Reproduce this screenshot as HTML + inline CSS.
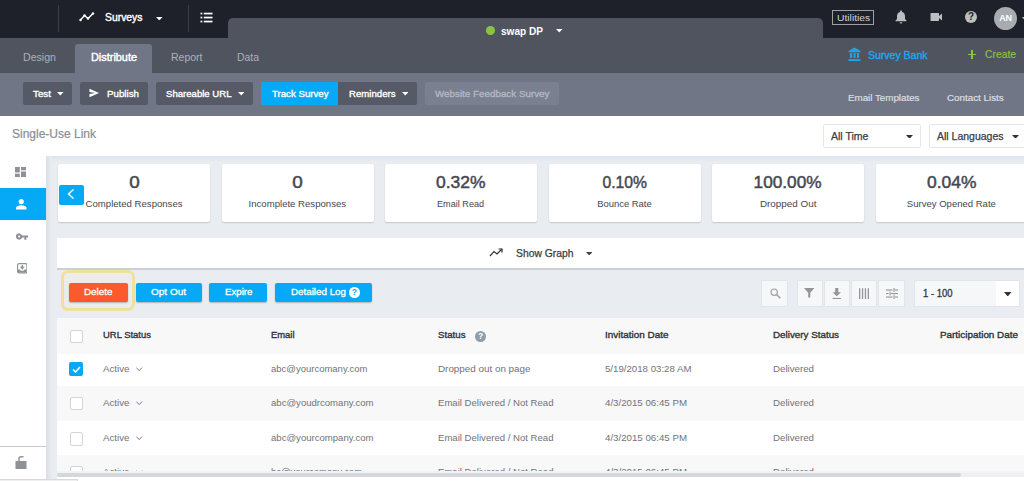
<!DOCTYPE html>
<html><head>
<meta charset="utf-8">
<style>
*{box-sizing:border-box;margin:0;padding:0}
html,body{width:1024px;height:481px;overflow:hidden;background:#fff;font-family:"Liberation Sans",sans-serif;}
body{position:relative;}
.abs{position:absolute;}
.t{position:absolute;white-space:nowrap;line-height:1;}
.s{display:inline-block;white-space:nowrap;}
#topbar{left:0;top:0;width:1024px;height:38px;background:#1f212a;}
#tabs{left:0;top:38px;width:1024px;height:35px;background:#50545e;}
#nametab{left:228px;top:17.500px;width:595px;height:25px;background:#50545e;border-radius:5px 5px 0 0;}
#toolbar{left:0;top:73px;width:1024px;height:43.300px;background:#717687;}
.vdiv{width:1px;background:#3a3d47;top:5px;height:27px;}
.btn{position:absolute;top:82px;height:22.5px;background:#565a66;border-radius:2px;}
.caret{position:absolute;width:0;height:0;border-left:3px solid transparent;border-right:3px solid transparent;border-top:3.5px solid #fff;}
#content{left:46px;top:156px;width:978px;height:325px;background:#e9edf1;}
.card{position:absolute;top:164px;width:152px;height:58px;background:#fff;border-radius:2px;box-shadow:0 1px 1.5px rgba(0,0,0,.16);}
.bbtn{position:absolute;top:283px;height:19px;background:#05a9f5;border-radius:2px;box-shadow:0 1px 1.5px rgba(0,0,0,.25);}
.ib{position:absolute;top:279.5px;height:27px;background:#f6f7f8;border:1px solid #e1e4e8;border-radius:1px;}
.row{position:absolute;left:0;width:967px;}
.cb{position:absolute;left:12.5px;width:13px;height:13.5px;border:1px solid #d2d5d9;border-radius:2px;background:#fff;}
</style>
</head>
<body>
<div class="abs" id="topbar"></div>
<div class="abs" id="tabs"></div>
<div class="abs" id="nametab"></div>
<div class="abs" id="toolbar"></div>
<div class="abs vdiv" style="left:58px"></div>
<div class="abs vdiv" style="left:188px"></div>

<svg class="abs" style="left:79px;top:12px" width="16" height="10" viewBox="0 0 16 10"><polyline points="1.5,8 5.5,3.5 9,6.5 14,1.5" fill="none" stroke="#fff" stroke-width="1.4"></polyline><circle cx="1.5" cy="8" r="1.2" fill="#fff"></circle><circle cx="5.5" cy="3.5" r="1.2" fill="#fff"></circle><circle cx="9" cy="6.5" r="1.2" fill="#fff"></circle><circle cx="14" cy="1.5" r="1.2" fill="#fff"></circle></svg>
<div class="t" style="top: 12px; font-size: 10.5px; color: rgb(255, 255, 255); -webkit-text-stroke: 0.4px rgb(255, 255, 255); left: 104.5px; transform: scaleX(0.988); transform-origin: 0px 0px;">Surveys</div>
<svg class="abs" style="left:156px;top:16.5px" width="6.5" height="3.5" viewBox="0 0 6.5 3.5"><path d="M0 0h6.5l-3.25 3.5z" fill="#fff"></path></svg>
<svg class="abs" style="left:200px;top:12px" width="13" height="11" viewBox="0 0 13 11"><g fill="#fff"><rect x="0.500" y="0.700" width="1.800" height="1.700"></rect><rect x="3.800" y="0.700" width="8.700" height="1.700"></rect><rect x="0.500" y="4.700" width="1.800" height="1.700"></rect><rect x="3.800" y="4.700" width="8.700" height="1.700"></rect><rect x="0.500" y="8.700" width="1.800" height="1.700"></rect><rect x="3.800" y="8.700" width="8.700" height="1.700"></rect></g></svg>
<div class="abs" style="left:486px;top:26.25px;width:9px;height:9px;border-radius:50%;background:#8bc53f"></div>
<div class="t" style="top: 26px; font-size: 10.5px; color: rgb(255, 255, 255); font-weight: bold; left: 501px; transform: scaleX(0.96); transform-origin: 0px 0px;">swap DP</div>
<svg class="abs" style="left:556px;top:29px" width="6.5" height="3.5" viewBox="0 0 6.5 3.5"><path d="M0 0h6.5l-3.25 3.5z" fill="#fff"></path></svg>
<div class="abs" style="left:832px;top:10px;width:42px;height:15px;border:1px solid #9fa0a5;"></div>
<div class="t" style="top: 14px; font-size: 9.2px; color: rgb(207, 208, 211); left: 836.75px; transform: scaleX(1.123); transform-origin: 0px 0px;">Utilities</div>
<svg class="abs" style="left:895px;top:10px" width="12" height="14" viewBox="0 0 12 14"><path d="M6 0.500c.7 0 1 .5 1 1v.4c2 .5 3 2.100 3 4.100v3l1.500 1.500v.8h-11v-.8l1.500-1.500v-3c0-2 1-3.600 3-4.100v-.4c0-.5.300-1 1-1zM4.800 12.200h2.400c0 .7-.5 1.300-1.200 1.300s-1.200-.6-1.200-1.300z" fill="#bdbec2"></path></svg>
<svg class="abs" style="left:930px;top:12px" width="13" height="10" viewBox="0 0 13 10"><path d="M1 1h7.500c.3 0 .5.200.5.500v2.500l3-2.500v7l-3-2.500v2.500c0 .3-.2.500-.5.500h-7.500c-.3 0-.5-.2-.5-.5v-7c0-.3.200-.5.500-.5z" fill="#bdbec2"></path></svg>
<div class="abs" style="left:965px;top:11px;width:12px;height:12px;border-radius:50%;background:#bdbec2;color:#1f212a;font-size:10px;font-weight:bold;text-align:center;line-height:12px">?</div>
<div class="abs" style="left:994px;top:7px;width:23px;height:23px;border-radius:50%;background:#a9abb0;color:#fff;font-size:9px;font-weight:bold;text-align:center;line-height:23px;letter-spacing:-0.3px">AN</div>
<svg class="abs" style="left:1021.5px;top:16.5px" width="6.5" height="3.5" viewBox="0 0 6.5 3.5"><path d="M0 0h6.5l-3.25 3.5z" fill="#ccc"></path></svg>
<div class="abs" style="left:75px;top:44px;width:77px;height:29px;background:#717687;border-radius:3px 3px 0 0"></div>
<div class="t" style="top: 53px; font-size: 10px; color: rgb(173, 177, 187); left: 23px; transform: scaleX(1.06); transform-origin: 0px 0px;">Design</div>
<div class="t" style="top: 53px; font-size: 10px; color: rgb(255, 255, 255); -webkit-text-stroke: 0.4px rgb(255, 255, 255); left: 90.5px; transform: scaleX(1.089); transform-origin: 0px 0px;">Distribute</div>
<div class="t" style="top: 53px; font-size: 10px; color: rgb(173, 177, 187); left: 171px; transform: scaleX(1.049); transform-origin: 0px 0px;">Report</div>
<div class="t" style="top: 53px; font-size: 10px; color: rgb(173, 177, 187); left: 237px; transform: scaleX(1.041); transform-origin: 0px 0px;">Data</div>
<svg class="abs" style="left:848px;top:47px" width="13" height="15" viewBox="0 0 13 15"><g fill="#1ba7ee"><path d="M6.500 0.500l6 3.500v1.200h-12v-1.200z"></path><rect x="2" y="6" width="2" height="5"></rect><rect x="5.500" y="6" width="2" height="5"></rect><rect x="9" y="6" width="2" height="5"></rect><rect x="0.500" y="12.200" width="12" height="1.800"></rect></g></svg>
<div class="t" style="top: 51px; font-size: 10px; color: rgb(27, 167, 238); -webkit-text-stroke: 0.35px rgb(27, 167, 238); left: 867.5px; transform: scaleX(1.049); transform-origin: 0px 0px;">Survey Bank</div>
<div class="abs" style="left:967.5px;top:53.5px;width:8.5px;height:1.6px;background:#8bc53f"></div>
<div class="abs" style="left:971px;top:50px;width:1.6px;height:8.5px;background:#8bc53f"></div>
<div class="t" style="top: 50px; font-size: 10px; color: rgb(139, 197, 63); -webkit-text-stroke: 0.15px rgb(139, 197, 63); left: 985px; transform: scaleX(1.033); transform-origin: 0px 0px;">Create</div>
<div class="btn" style="left:23px;width:49px;"></div>
<div class="t" style="top: 89px; font-size: 9.5px; color: rgb(255, 255, 255); -webkit-text-stroke: 0.35px rgb(255, 255, 255); left: 33px; transform: scaleX(1.032); transform-origin: 0px 0px;">Test</div>
<svg class="abs" style="left:57px;top:92px" width="6.5" height="3.5" viewBox="0 0 6.5 3.5"><path d="M0 0h6.5l-3.25 3.5z" fill="#fff"></path></svg>
<div class="btn" style="left:80px;width:68px;"></div>
<svg class="abs" style="left:89px;top:88px" width="10.5" height="10" viewBox="0 0 11 10"><path d="M0.500 0.500l10 4.500l-10 4.500v-3.500l6-1l-6-1z" fill="#fff"></path></svg>
<div class="t" style="top: 89px; font-size: 9.5px; color: rgb(255, 255, 255); -webkit-text-stroke: 0.35px rgb(255, 255, 255); left: 106.5px; transform: scaleX(1.027); transform-origin: 0px 0px;">Publish</div>
<div class="btn" style="left:156px;width:97px;"></div>
<div class="t" style="top: 89px; font-size: 9.5px; color: rgb(255, 255, 255); -webkit-text-stroke: 0.35px rgb(255, 255, 255); left: 166px; transform: scaleX(1.008); transform-origin: 0px 0px;">Shareable URL</div>
<svg class="abs" style="left:237.5px;top:92px" width="6.5" height="3.5" viewBox="0 0 6.5 3.5"><path d="M0 0h6.5l-3.25 3.5z" fill="#fff"></path></svg>
<div class="btn" style="left:261px;width:77px;background:#05a9f5;border-radius:2px 0 0 2px"></div>
<div class="t" style="top: 89px; font-size: 9.5px; color: rgb(255, 255, 255); -webkit-text-stroke: 0.35px rgb(255, 255, 255); left: 271.5px; transform: scaleX(1.016); transform-origin: 0px 0px;">Track Survey</div>
<div class="btn" style="left:338px;width:78.5px;border-radius:0 2px 2px 0"></div>
<div class="t" style="top: 89px; font-size: 9.5px; color: rgb(255, 255, 255); -webkit-text-stroke: 0.35px rgb(255, 255, 255); left: 348.5px; transform: scaleX(1.012); transform-origin: 0px 0px;">Reminders</div>
<svg class="abs" style="left:401.5px;top:92px" width="6.5" height="3.5" viewBox="0 0 6.5 3.5"><path d="M0 0h6.5l-3.25 3.5z" fill="#fff"></path></svg>
<div class="btn" style="left:425px;width:134px;background:#7b8090"></div>
<div class="t" style="top: 89px; font-size: 9.5px; color: rgb(179, 183, 194); -webkit-text-stroke: 0.35px rgb(179, 183, 194); left: 434.5px; transform: scaleX(1.034); transform-origin: 0px 0px;">Website Feedback Survey</div>
<div class="t" style="top: 93px; font-size: 9.5px; color: rgb(223, 224, 229); -webkit-text-stroke: 0.15px rgb(223, 224, 229); left: 847.5px; transform: scaleX(1.028); transform-origin: 0px 0px;">Email Templates</div>
<div class="t" style="top: 93px; font-size: 9.5px; color: rgb(223, 224, 229); -webkit-text-stroke: 0.15px rgb(223, 224, 229); left: 946.75px; transform: scaleX(1.033); transform-origin: 0px 0px;">Contact Lists</div>
<div class="t" style="top: 128px; font-size: 12px; color: rgb(138, 141, 148); -webkit-text-stroke: 0.2px rgb(138, 141, 148); left: 11.5px; transform: scaleX(0.999); transform-origin: 0px 0px;">Single-Use Link</div>
<div class="abs" style="left:822.5px;top:124px;width:98px;height:24px;border:1px solid #e3e6ea;border-radius:2px;background:#fff"></div>
<div class="t" style="top: 132px; font-size: 10px; color: rgb(58, 61, 68); -webkit-text-stroke: 0.25px rgb(58, 61, 68); left: 830.5px; transform: scaleX(1.054); transform-origin: 0px 0px;">All Time</div>
<svg class="abs" style="left:905.7px;top:134.5px" width="7" height="3.8" viewBox="0 0 7 3.8"><path d="M0 0h7l-3.5 3.8z" fill="#333"></path></svg>
<div class="abs" style="left:929px;top:124px;width:100px;height:24px;border:1px solid #e3e6ea;border-radius:2px;background:#fff"></div>
<div class="t" style="top: 132px; font-size: 10px; color: rgb(58, 61, 68); -webkit-text-stroke: 0.25px rgb(58, 61, 68); left: 937px; transform: scaleX(1.049); transform-origin: 0px 0px;">All Languages</div>
<svg class="abs" style="left:1011.7px;top:134.5px" width="7" height="3.8" viewBox="0 0 7 3.8"><path d="M0 0h7l-3.5 3.8z" fill="#333"></path></svg>
<div class="abs" id="content"></div>
<div class="abs" style="left:46px;top:156px;width:978px;height:6px;background:linear-gradient(#dde3ec,#e9edf1)"></div>
<div class="abs" style="left:46px;top:156px;width:6px;height:325px;background:linear-gradient(90deg,#d9dfe8,#e9edf1)"></div>
<div class="abs" style="left:0;top:156px;width:46px;height:325px;background:#fff"></div>
<div class="abs" style="left:0;top:188px;width:46px;height:32px;background:#05a9f5"></div>
<svg class="abs" style="left:15px;top:167px" width="11" height="10" viewBox="0 0 11 10"><g fill="#8e9196"><rect x="0" y="0" width="4.800" height="5.500"></rect><rect x="6" y="0" width="5" height="3.300"></rect><rect x="0" y="6.700" width="4.800" height="3.300"></rect><rect x="6" y="4.500" width="5" height="5.500"></rect></g></svg>
<svg class="abs" style="left:16px;top:199px" width="10.5" height="10.500" viewBox="0 0 10 10"><circle cx="5" cy="2.500" r="2.400" fill="#fff"></circle><path d="M0 10v-1.500c0-1.800 3.300-2.600 5-2.600s5 .8 5 2.600v1.500z" fill="#fff"></path></svg>
<svg class="abs" style="left:15.5px;top:232.500px" width="12.500" height="7" viewBox="0 0 12 6"><path d="M3 0a3 3 0 1 0 2.800 4h2.200v2h2v-2h2v-2h-6.200a3 3 0 0 0-2.800-2zM3 2a1 1 0 1 1 0 2a1 1 0 0 1 0-2z" fill="#8e9196" fill-rule="evenodd"></path></svg>
<svg class="abs" style="left:16.5px;top:263px" width="10.500" height="10.500" viewBox="0 0 11 11"><rect x="0.600" y="0.600" width="9.800" height="9.800" rx="1.500" fill="none" stroke="#8e9196" stroke-width="1.200"></rect><path d="M3 4h5l-2.500 3z" fill="#8e9196"></path><rect x="4.700" y="2.200" width="1.600" height="2.500" fill="#8e9196"></rect><path d="M1 6.800h2.200l.8 1.400h3l.8-1.400h2.200v3.200h-9z" fill="#8e9196"></path></svg>
<div class="abs" style="left:0;top:446px;width:46px;height:1px;background:#c9c9c9"></div>
<svg class="abs" style="left:15px;top:456px" width="12" height="13" viewBox="0 0 12 13"><path d="M0.500 5h11v8h-11z" fill="#8e9196"></path><path d="M4 5v-2.500c0-1 .8-1.700 2-1.700h2.500" fill="none" stroke="#8e9196" stroke-width="1.500"></path></svg>
<div class="card" style="left:58px"></div>
<div class="t" style="top:175px;font-size:16px;color:#45474f;-webkit-text-stroke:0.45px #45474f;left:34px;width:200px;text-align:center;"><span class="s" style="transform: scaleX(1.179); transform-origin: 50% 0px;">0</span></div>
<div class="t" style="top:199px;font-size:9.5px;color:#45474f;left:34px;width:200px;text-align:center;"><span class="s" style="transform: scaleX(1.009); transform-origin: 50% 0px;">Completed Responses</span></div>
<div class="card" style="left:221.5px"></div>
<div class="t" style="top:175px;font-size:16px;color:#45474f;-webkit-text-stroke:0.45px #45474f;left:197.5px;width:200px;text-align:center;"><span class="s" style="transform: scaleX(1.179); transform-origin: 50% 0px;">0</span></div>
<div class="t" style="top:199px;font-size:9.5px;color:#45474f;left:197.5px;width:200px;text-align:center;"><span class="s" style="transform: scaleX(1.009); transform-origin: 50% 0px;">Incomplete Responses</span></div>
<div class="card" style="left:385px"></div>
<div class="t" style="top:175px;font-size:16px;color:#45474f;-webkit-text-stroke:0.45px #45474f;left:361px;width:200px;text-align:center;"><span class="s" style="transform: scaleX(1.091); transform-origin: 50% 0px;">0.32%</span></div>
<div class="t" style="top:199px;font-size:9.5px;color:#45474f;left:361px;width:200px;text-align:center;"><span class="s" style="transform: scaleX(0.957); transform-origin: 50% 0px;">Email Read</span></div>
<div class="card" style="left:548.5px"></div>
<div class="t" style="top:175px;font-size:16px;color:#45474f;-webkit-text-stroke:0.45px #45474f;left:524.5px;width:200px;text-align:center;"><span class="s" style="transform: scaleX(0.981); transform-origin: 50% 0px;">0.10%</span></div>
<div class="t" style="top:199px;font-size:9.5px;color:#45474f;left:524.5px;width:200px;text-align:center;"><span class="s" style="transform: scaleX(0.992); transform-origin: 50% 0px;">Bounce Rate</span></div>
<div class="card" style="left:712px"></div>
<div class="t" style="top:175px;font-size:16px;color:#45474f;-webkit-text-stroke:0.45px #45474f;left:688px;width:200px;text-align:center;"><span class="s" style="transform: scaleX(1.076); transform-origin: 50% 0px;">100.00%</span></div>
<div class="t" style="top:199px;font-size:9.5px;color:#45474f;left:688px;width:200px;text-align:center;"><span class="s" style="transform: scaleX(1.038); transform-origin: 50% 0px;">Dropped Out</span></div>
<div class="card" style="left:875.5px"></div>
<div class="t" style="top:175px;font-size:16px;color:#45474f;-webkit-text-stroke:0.45px #45474f;left:851.5px;width:200px;text-align:center;"><span class="s" style="transform: scaleX(1.091); transform-origin: 50% 0px;">0.04%</span></div>
<div class="t" style="top:199px;font-size:9.5px;color:#45474f;left:851.5px;width:200px;text-align:center;"><span class="s" style="transform: scaleX(1.003); transform-origin: 50% 0px;">Survey Opened Rate</span></div>
<div class="abs" style="left:59px;top:185px;width:24.500px;height:19.500px;background:#05a9f5;border-radius:2px"></div>
<svg class="abs" style="left:67px;top:189px" width="8" height="10" viewBox="0 0 8 10"><polyline points="6.500,0.500 1.500,5 6.500,9.500" fill="none" stroke="#fff" stroke-width="1.400"></polyline></svg>
<div class="abs" style="left:57px;top:237.500px;width:967px;height:32px;background:#fff;border-bottom:2px solid #ccd0d5"></div>
<svg class="abs" style="left:489px;top:247.500px" width="14" height="9" viewBox="0 0 14 9"><polyline points="1,8 5,3.500 8,6 13,1" fill="none" stroke="#333" stroke-width="1.200"></polyline><polyline points="9.500,1 13,1 13,4.500" fill="none" stroke="#333" stroke-width="1.200"></polyline></svg>
<div class="t" style="top: 248px; font-size: 10.5px; color: rgb(58, 61, 68); -webkit-text-stroke: 0.25px rgb(58, 61, 68); left: 515.5px; transform: scaleX(0.985); transform-origin: 0px 0px;">Show Graph</div>
<svg class="abs" style="left:585.5px;top:251.5px" width="6.5" height="3.5" viewBox="0 0 6.5 3.5"><path d="M0 0h6.5l-3.25 3.5z" fill="#444"></path></svg>
<div class="abs" style="left:60.500px;top:270px;width:74.500px;height:41px;border:3px solid #f1dfa2;border-radius:7px;background:#ecece8"></div>
<div class="bbtn" style="left:68.5px;width:59.5px;background:#fb5a2c"></div>
<div class="t" style="top: 287px; font-size: 9.5px; color: rgb(255, 255, 255); -webkit-text-stroke: 0.28px rgb(255, 255, 255); left: 84px; transform: scaleX(1.038); transform-origin: 0px 0px;">Delete</div>
<div class="bbtn" style="left:135.5px;width:66px;"></div>
<div class="t" style="top: 287px; font-size: 9.5px; color: rgb(255, 255, 255); -webkit-text-stroke: 0.28px rgb(255, 255, 255); left: 151px; transform: scaleX(1.052); transform-origin: 0px 0px;">Opt Out</div>
<div class="bbtn" style="left:209px;width:58px;"></div>
<div class="t" style="top: 287px; font-size: 9.5px; color: rgb(255, 255, 255); -webkit-text-stroke: 0.28px rgb(255, 255, 255); left: 224.5px; transform: scaleX(1.021); transform-origin: 0px 0px;">Expire</div>
<div class="bbtn" style="left:274.5px;width:97px;"></div>
<div class="t" style="top: 287px; font-size: 9.5px; color: rgb(255, 255, 255); -webkit-text-stroke: 0.28px rgb(255, 255, 255); left: 290.5px; transform: scaleX(1.031); transform-origin: 0px 0px;">Detailed Log</div>
<div class="abs" style="left:349px;top:287px;width:10.500px;height:10.500px;border-radius:50%;background:#fff;color:#05a9f5;font-size:8.500px;font-weight:bold;text-align:center;line-height:10.500px">?</div>
<div class="ib" style="left:761px;width:27px"></div>
<div class="ib" style="left:796.5px;width:26.5px"></div>
<div class="ib" style="left:824px;width:26px"></div>
<div class="ib" style="left:851px;width:26px"></div>
<div class="ib" style="left:878px;width:27px"></div>
<div class="ib" style="left:913.500px;width:106px"></div>
<div class="abs" style="left:996px;top:280.500px;width:22.500px;height:25px;background:#fff"></div>
<div class="t" style="top: 289px; font-size: 10px; color: rgb(51, 54, 60); -webkit-text-stroke: 0.3px rgb(51, 54, 60); left: 922.5px; transform: scaleX(0.947); transform-origin: 0px 0px;">1 - 100</div>
<svg class="abs" style="left:1004px;top:291.5px" width="7.5" height="4.5" viewBox="0 0 7.5 4.5"><path d="M0 0h7.5l-3.75 4.5z" fill="#333"></path></svg>
<svg class="abs" style="left:769.5px;top:288px" width="11" height="11" viewBox="0 0 11 11"><circle cx="4.200" cy="4.200" r="3.200" fill="none" stroke="#9a9da2" stroke-width="1.200"></circle><line x1="6.500" y1="6.500" x2="10.300" y2="10.300" stroke="#9a9da2" stroke-width="1.500"></line></svg>
<svg class="abs" style="left:803.5px;top:288px" width="10.500" height="9.500" viewBox="0 0 10 9"><path d="M0 0h10l-4 4.500v4.500h-2v-4.500z" fill="#93969b"></path></svg>
<svg class="abs" style="left:832px;top:287.500px" width="9.500" height="11.500" viewBox="0 0 9 11"><path d="M3 0h3v4h2.500l-4 4l-4-4h2.500z" fill="#93969b"></path><rect x="0.500" y="9.500" width="8" height="1.300" fill="#93969b"></rect></svg>
<svg class="abs" style="left:859px;top:287.500px" width="10" height="11.500" viewBox="0 0 10 11"><g fill="#93969b"><rect x="0" y="0" width="1.300" height="11"></rect><rect x="2.900" y="0" width="1.300" height="11"></rect><rect x="5.800" y="0" width="1.300" height="11"></rect><rect x="8.700" y="0" width="1.300" height="11"></rect></g></svg>
<svg class="abs" style="left:885.5px;top:287.500px" width="12" height="11" viewBox="0 0 12 11"><g fill="#93969b"><rect x="0" y="1.500" width="6.500" height="1.100"></rect><rect x="9" y="1.500" width="3" height="1.100"></rect><rect x="7.500" y="0" width="1.100" height="4"></rect><rect x="0" y="5" width="2.500" height="1.100"></rect><rect x="5" y="5" width="7" height="1.100"></rect><rect x="3.500" y="3.500" width="1.100" height="4"></rect><rect x="0" y="8.500" width="6.500" height="1.100"></rect><rect x="9" y="8.500" width="3" height="1.100"></rect><rect x="7.500" y="7" width="1.100" height="4"></rect></g></svg>
<div class="abs" style="left:57px;top:318px;width:967px;height:153px;overflow:hidden;background:#fff" id="tbl">
<div class="row" style="top:0;height:35.500px;background:#f8f8f8"></div>
<div class="row" style="top:68px;height:34.500px;background:#f8f8f8"></div>
<div class="row" style="top:137px;height:34.500px;background:#f8f8f8"></div>
<div class="cb" style="top:11.500px"></div>
<div class="t" style="top: 12px; font-size: 9.5px; color: rgb(47, 50, 57); -webkit-text-stroke: 0.35px rgb(47, 50, 57); left: 46px; transform: scaleX(0.995); transform-origin: 0px 0px;">URL Status</div>
<div class="t" style="top: 12px; font-size: 9.5px; color: rgb(47, 50, 57); -webkit-text-stroke: 0.35px rgb(47, 50, 57); left: 213.5px; transform: scaleX(0.989); transform-origin: 0px 0px;">Email</div>
<div class="t" style="top: 12px; font-size: 9.5px; color: rgb(47, 50, 57); -webkit-text-stroke: 0.35px rgb(47, 50, 57); left: 380.5px; transform: scaleX(1.021); transform-origin: 0px 0px;">Status</div>
<div class="abs" style="left:418.200px;top:13.200px;width:11px;height:11px;border-radius:50%;background:#8f9ca8;color:#fff;font-size:8.500px;font-weight:bold;text-align:center;line-height:11px">?</div>
<div class="t" style="top: 12px; font-size: 9.5px; color: rgb(47, 50, 57); -webkit-text-stroke: 0.35px rgb(47, 50, 57); left: 548px; transform: scaleX(1.046); transform-origin: 0px 0px;">Invitation Date</div>
<div class="t" style="top: 12px; font-size: 9.5px; color: rgb(47, 50, 57); -webkit-text-stroke: 0.35px rgb(47, 50, 57); left: 715.5px; transform: scaleX(1.033); transform-origin: 0px 0px;">Delivery Status</div>
<div class="t" style="top: 12px; font-size: 9.5px; color: rgb(47, 50, 57); -webkit-text-stroke: 0.35px rgb(47, 50, 57); left: 883px; transform: scaleX(1.04); transform-origin: 0px 0px;">Participation Date</div>
<div class="abs" style="left:12px;top:44px;width:14px;height:14px;border-radius:2px;background:#05a9f5"></div>
<svg class="abs" style="left:14.500px;top:47.500px" width="9" height="7" viewBox="0 0 9 7"><polyline points="1,3.500 3.500,6 8,1" fill="none" stroke="#fff" stroke-width="1.500"></polyline></svg>
<div class="t" style="top: 46px; font-size: 9.5px; color: rgb(112, 115, 122); left: 46px; transform: scaleX(1.024); transform-origin: 0px 0px;">Active</div>
<svg class="abs" style="left:79.300px;top:48.5px" width="6.400" height="4.500" viewBox="0 0 6.400 4.500"><polyline points="0.400,0.600 3.200,3.700 6,0.600" fill="none" stroke="#70737a" stroke-width="0.900"></polyline></svg>
<div class="t" style="top: 46px; font-size: 9.5px; color: rgb(112, 115, 122); left: 213.5px; transform: scaleX(0.999); transform-origin: 0px 0px;">abc@yourcomany.com</div>
<div class="t" style="top: 46px; font-size: 9.5px; color: rgb(112, 115, 122); left: 380.5px; transform: scaleX(1.036); transform-origin: 0px 0px;">Dropped out on page</div>
<div class="t" style="top: 46px; font-size: 9.5px; color: rgb(112, 115, 122); left: 548px; transform: scaleX(1.017); transform-origin: 0px 0px;">5/19/2018 03:28 AM</div>
<div class="t" style="top: 46px; font-size: 9.5px; color: rgb(112, 115, 122); left: 715.5px; transform: scaleX(1.021); transform-origin: 0px 0px;">Delivered</div>
<div class="cb" style="top:78.5px"></div>
<div class="t" style="top: 80px; font-size: 9.5px; color: rgb(112, 115, 122); left: 46px; transform: scaleX(1.024); transform-origin: 0px 0px;">Active</div>
<svg class="abs" style="left:79.300px;top:82.5px" width="6.400" height="4.500" viewBox="0 0 6.400 4.500"><polyline points="0.400,0.600 3.200,3.700 6,0.600" fill="none" stroke="#70737a" stroke-width="0.900"></polyline></svg>
<div class="t" style="top: 80px; font-size: 9.5px; color: rgb(112, 115, 122); left: 213.5px; transform: scaleX(1.006); transform-origin: 0px 0px;">abc@youdrcomany.com</div>
<div class="t" style="top: 80px; font-size: 9.5px; color: rgb(112, 115, 122); left: 380.5px; transform: scaleX(1.008); transform-origin: 0px 0px;">Email Delivered / Not Read</div>
<div class="t" style="top: 80px; font-size: 9.5px; color: rgb(112, 115, 122); left: 548px; transform: scaleX(1.021); transform-origin: 0px 0px;">4/3/2015 06:45 PM</div>
<div class="t" style="top: 80px; font-size: 9.5px; color: rgb(112, 115, 122); left: 715.5px; transform: scaleX(1.021); transform-origin: 0px 0px;">Delivered</div>
<div class="cb" style="top:114.0px"></div>
<div class="t" style="top: 115px; font-size: 9.5px; color: rgb(112, 115, 122); left: 46px; transform: scaleX(1.024); transform-origin: 0px 0px;">Active</div>
<svg class="abs" style="left:79.300px;top:118.0px" width="6.400" height="4.500" viewBox="0 0 6.400 4.500"><polyline points="0.400,0.600 3.200,3.700 6,0.600" fill="none" stroke="#70737a" stroke-width="0.900"></polyline></svg>
<div class="t" style="top: 115px; font-size: 9.5px; color: rgb(112, 115, 122); left: 213.5px; transform: scaleX(1.006); transform-origin: 0px 0px;">abc@yourcompany.com</div>
<div class="t" style="top: 115px; font-size: 9.5px; color: rgb(112, 115, 122); left: 380.5px; transform: scaleX(1.008); transform-origin: 0px 0px;">Email Delivered / Not Read</div>
<div class="t" style="top: 115px; font-size: 9.5px; color: rgb(112, 115, 122); left: 548px; transform: scaleX(1.021); transform-origin: 0px 0px;">4/3/2015 06:45 PM</div>
<div class="t" style="top: 115px; font-size: 9.5px; color: rgb(112, 115, 122); left: 715.5px; transform: scaleX(1.021); transform-origin: 0px 0px;">Delivered</div>
<div class="cb" style="top:148.0px"></div>
<div class="t" style="top: 149px; font-size: 9.5px; color: rgb(112, 115, 122); left: 46px; transform: scaleX(1.024); transform-origin: 0px 0px;">Active</div>
<svg class="abs" style="left:79.300px;top:152.0px" width="6.400" height="4.500" viewBox="0 0 6.400 4.500"><polyline points="0.400,0.600 3.200,3.700 6,0.600" fill="none" stroke="#70737a" stroke-width="0.900"></polyline></svg>
<div class="t" style="top: 149px; font-size: 9.5px; color: rgb(112, 115, 122); left: 213.5px; transform: scaleX(0.997); transform-origin: 0px 0px;">bc@yourcomany.com</div>
<div class="t" style="top: 149px; font-size: 9.5px; color: rgb(112, 115, 122); left: 380.5px; transform: scaleX(1.008); transform-origin: 0px 0px;">Email Delivered / Not Read</div>
<div class="t" style="top: 149px; font-size: 9.5px; color: rgb(112, 115, 122); left: 548px; transform: scaleX(1.021); transform-origin: 0px 0px;">4/3/2015 06:45 PM</div>
<div class="t" style="top: 149px; font-size: 9.5px; color: rgb(112, 115, 122); left: 715.5px; transform: scaleX(1.021); transform-origin: 0px 0px;">Delivered</div>
</div>
<div class="abs" style="left:57px;top:471px;width:967px;height:10px;background:#fff"></div>
<div class="abs" style="left:57px;top:471px;width:967px;height:2px;background:#f1f3f5"></div>
<div class="abs" style="left:57px;top:473px;width:967px;height:4px;background:#eef0f3"></div>
<div class="abs" style="left:57px;top:473px;width:903.500px;height:4px;background:#d4d8dd;border-radius:2px"></div>
<div class="abs" style="left:0;top:478.500px;width:78px;height:3px;background:#efefef;border-top:1px solid #d9d9d9;border-right:1px solid #d9d9d9"></div>

</body></html>
